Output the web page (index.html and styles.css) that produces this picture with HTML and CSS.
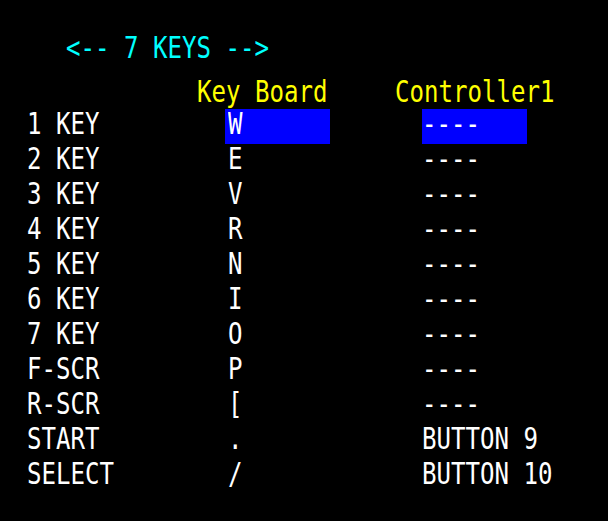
FILE: index.html
```html
<!DOCTYPE html>
<html>
<head>
<meta charset="utf-8">
<link rel="stylesheet" href="styles.css">
</head>
<body>
<div class="screen">
  <div class="title"><span class="t">&lt;-- 7 KEYS --&gt;</span></div>
  <div class="head">
    <div class="hcell"><span class="t">Key Board</span></div>
    <div class="hcell"><span class="t">Controller1</span></div>
  </div>
  <div class="row">
    <div class="lab"><span class="t">1 KEY</span></div>
    <div class="key sel"><span class="t">W</span></div>
    <div class="pad sel"><span class="t">----</span></div>
  </div>
  <div class="row">
    <div class="lab"><span class="t">2 KEY</span></div>
    <div class="key"><span class="t">E</span></div>
    <div class="pad"><span class="t">----</span></div>
  </div>
  <div class="row">
    <div class="lab"><span class="t">3 KEY</span></div>
    <div class="key"><span class="t">V</span></div>
    <div class="pad"><span class="t">----</span></div>
  </div>
  <div class="row">
    <div class="lab"><span class="t">4 KEY</span></div>
    <div class="key"><span class="t">R</span></div>
    <div class="pad"><span class="t">----</span></div>
  </div>
  <div class="row">
    <div class="lab"><span class="t">5 KEY</span></div>
    <div class="key"><span class="t">N</span></div>
    <div class="pad"><span class="t">----</span></div>
  </div>
  <div class="row">
    <div class="lab"><span class="t">6 KEY</span></div>
    <div class="key"><span class="t">I</span></div>
    <div class="pad"><span class="t">----</span></div>
  </div>
  <div class="row">
    <div class="lab"><span class="t">7 KEY</span></div>
    <div class="key"><span class="t">O</span></div>
    <div class="pad"><span class="t">----</span></div>
  </div>
  <div class="row">
    <div class="lab"><span class="t">F-SCR</span></div>
    <div class="key"><span class="t">P</span></div>
    <div class="pad"><span class="t">----</span></div>
  </div>
  <div class="row">
    <div class="lab"><span class="t">R-SCR</span></div>
    <div class="key"><span class="t">[</span></div>
    <div class="pad"><span class="t">----</span></div>
  </div>
  <div class="row">
    <div class="lab"><span class="t">START</span></div>
    <div class="key"><span class="t">.</span></div>
    <div class="pad"><span class="t">BUTTON 9</span></div>
  </div>
  <div class="row">
    <div class="lab"><span class="t">SELECT</span></div>
    <div class="key"><span class="t">/</span></div>
    <div class="pad"><span class="t">BUTTON 10</span></div>
  </div>
</div>
</body>
</html>
```
FILE: styles.css
```css
html, body {
  margin: 0;
  padding: 0;
  background: #000;
}
body {
  width: 608px;
  height: 521px;
  overflow: hidden;
}
.screen {
  padding-top: 33px;
  font-family: "DejaVu Sans Mono", monospace;
  font-size: 30px;
  line-height: 29px;
  color: #fff;
}
.t {
  display: inline-block;
  white-space: pre;
  transform: scaleX(0.803);
  transform-origin: 0 0;
}
.title {
  color: #0ff;
  padding-left: 66px;
  height: 44px;
}
.head {
  display: grid;
  grid-template-columns: 198px 1fr;
  padding-left: 197px;
  height: 32px;
  color: #ff0;
}
.row {
  display: grid;
  grid-template-columns: 198px 197px 1fr;
  padding-left: 27px;
  height: 35px;
}
.key {
  padding-left: 3px;
}
.sel {
  width: 105px;
  height: 35px;
  background: #00f;
  box-sizing: border-box;
}
```
